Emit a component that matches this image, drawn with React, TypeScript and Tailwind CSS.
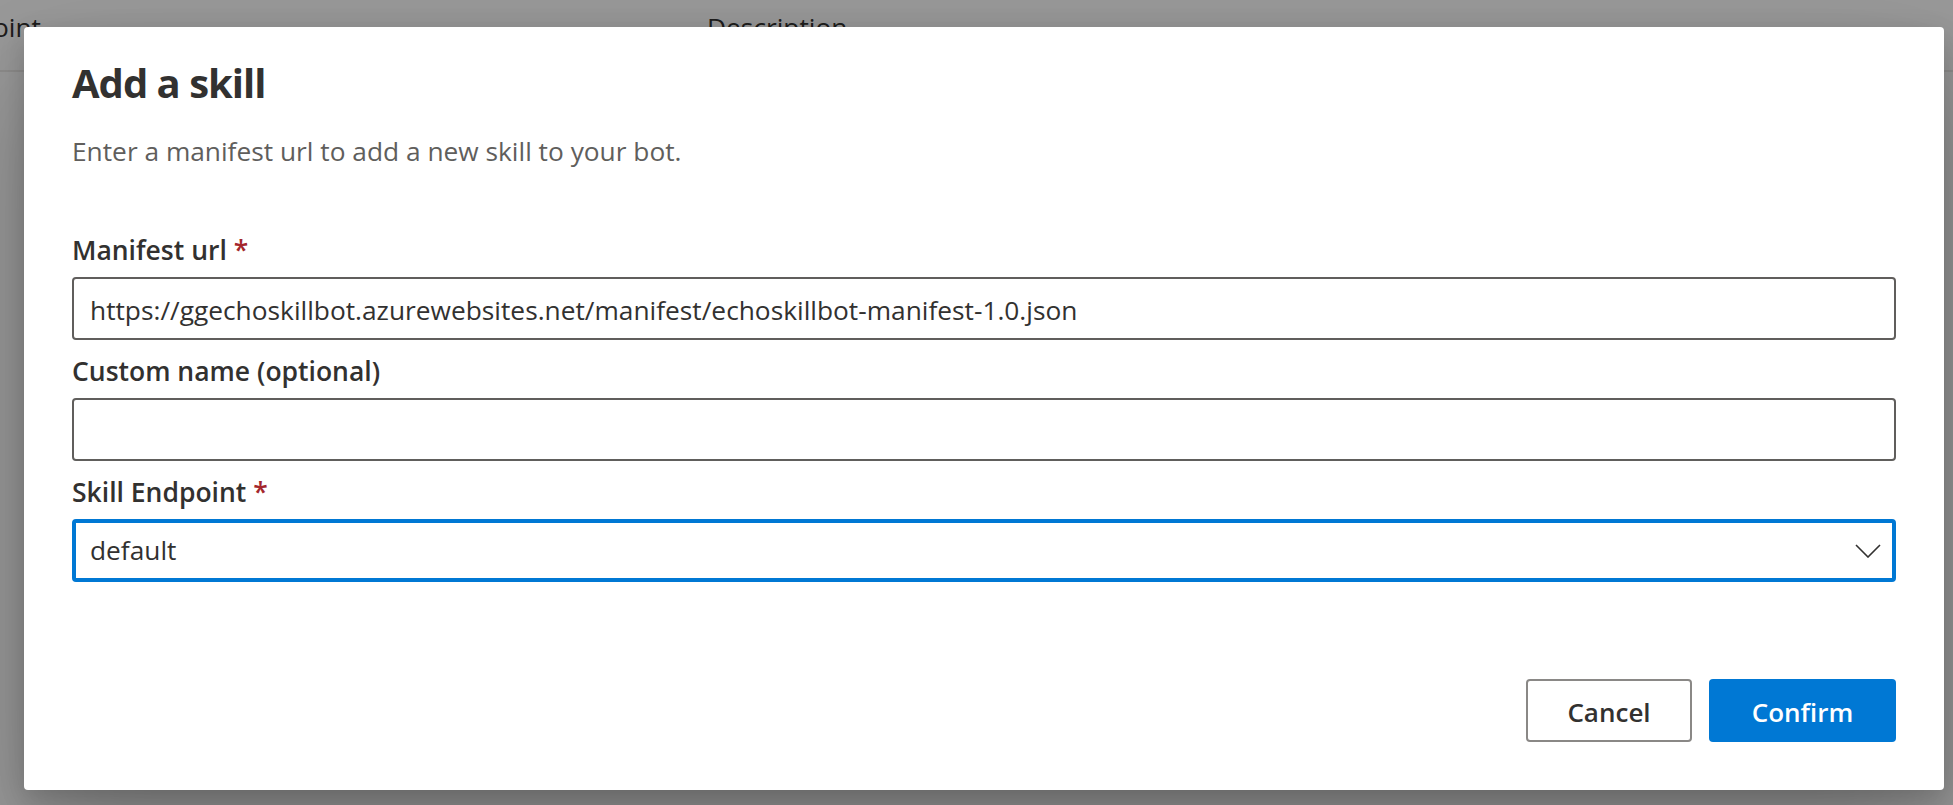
import React from "react";

export default function App() {
  return (
    <div className="relative h-[805px] w-full overflow-hidden bg-white font-['Open_Sans',sans-serif] text-[#323130]">
      {/* table header behind the modal */}
      <div className="flex h-[72px] items-start border-b-2 border-[#edebe9] pt-[9px] text-[26.3px] leading-[36px]">
        <div className="flex w-[41px] shrink-0 justify-end whitespace-nowrap">
          <span>Endpoint</span>
        </div>
        <div className="ml-[666px] whitespace-nowrap">Description</div>
      </div>

      {/* overlay */}
      <div className="absolute inset-0 bg-black/40" />

      {/* dialog */}
      <div className="absolute left-[24px] top-[27px] w-[1920px] rounded-[4px] bg-white px-[48px] pb-[48px] pt-[30px] shadow-[0_51px_115px_rgba(0,0,0,0.22),0_10px_29px_rgba(0,0,0,0.18)]">
        <h1 className="text-[40px] font-bold leading-[52px] tracking-[-1px] text-[#323130]">Add a skill</h1>
        <p className="mt-[24px] text-[26.3px] leading-[36px] text-[#605e5c]">
          Enter a manifest url to add a new skill to your bot.
        </p>

        <div className="mt-[50px] flex flex-col">
          <label className="pb-[8px] pt-[12px] text-[26.5px] font-semibold leading-[38px] text-[#323130]">
            Manifest url <span className="text-[#a4262c]">*</span>
          </label>
          <div className="flex h-[63px] items-center rounded-[4px] border-2 border-[#605e5c] px-[16px] pt-[5px] text-[26.3px] text-[#323130]">
            https://ggechoskillbot.azurewebsites.net/manifest/echoskillbot-manifest-1.0.json
          </div>

          <label className="pb-[8px] pt-[12px] text-[26.5px] font-semibold leading-[38px] text-[#323130]">
            Custom name (optional)
          </label>
          <div className="h-[63px] rounded-[4px] border-2 border-[#605e5c]" />

          <label className="pb-[8px] pt-[12px] text-[26.5px] font-semibold leading-[38px] text-[#323130]">
            Skill Endpoint <span className="text-[#a4262c]">*</span>
          </label>
          <div className="flex h-[63px] items-center justify-between rounded-[4px] border-4 border-[#0078d4] pl-[14px] pr-[11px] text-[26.3px] text-[#323130]">
            <span>default</span>
            <svg width="26" height="14" viewBox="0 0 26 14" fill="none">
              <path d="M1 1 L13 13 L25 1" stroke="#323130" strokeWidth="1.6" />
            </svg>
          </div>
        </div>

        <div className="mt-[97px] flex justify-end gap-[17px]">
          <button className="flex h-[63px] w-[166px] items-center justify-center rounded-[4px] border-2 border-[#8a8886] bg-white pt-[3px] text-[26px] font-semibold text-[#323130]">
            Cancel
          </button>
          <button className="flex h-[63px] w-[187px] items-center justify-center rounded-[4px] bg-[#0078d4] pt-[3px] text-[26px] font-semibold text-white">
            Confirm
          </button>
        </div>
      </div>
    </div>
  );
}
